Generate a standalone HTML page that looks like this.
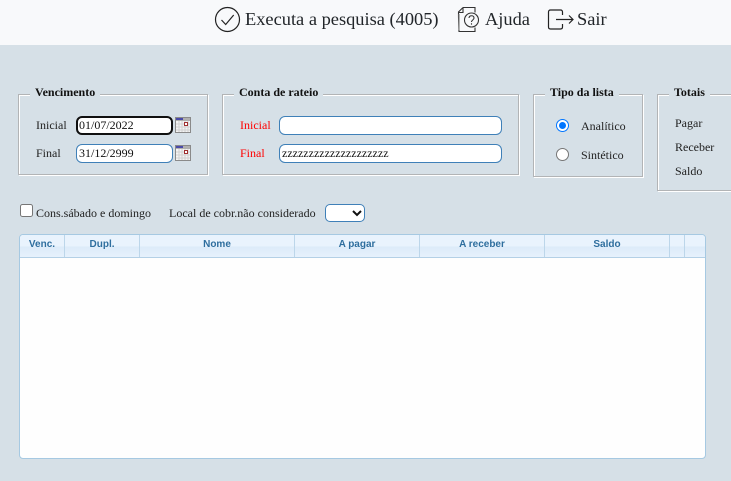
<!DOCTYPE html>
<html lang="pt">
<head>
<meta charset="utf-8">
<title>Pesquisa</title>
<style>
html,body{margin:0;padding:0;width:731px;height:481px;overflow:hidden;background:#d6e0e7;font-family:"Liberation Serif",serif;color:#222;}
#top{position:absolute;left:0;top:0;width:731px;height:45px;background:#f8f9fb;}
.tt{position:absolute;top:7px;font-size:18.4px;line-height:24px;color:#212529;white-space:nowrap;}
.fs{position:absolute;box-sizing:border-box;border:1px solid #b2b4b6;box-shadow:1px 1px 0 #fff,inset 1px 1px 0 #fff;}
.lg{position:absolute;top:-11px;background:#d6e0e7;padding:0 5px;font-weight:bold;font-size:12px;line-height:16px;color:#111;white-space:nowrap;}
.lb{position:absolute;font-size:12px;line-height:16px;color:#222;white-space:nowrap;}
.red{color:#f00;}
.in{position:absolute;box-sizing:border-box;height:19px;background:#fff;border:1px solid #3f80b8;border-radius:6px;font-size:12px;line-height:17px;padding-left:2px;color:#111;white-space:nowrap;overflow:hidden;}
.focus{border:2px solid #101010;line-height:15px;padding-left:1px;}
.cal{position:absolute;width:16px;height:16px;}
.radio{position:absolute;box-sizing:border-box;width:13px;height:13px;border-radius:50%;background:#fff;border:1px solid #767676;}
.radio.on{border:1.5px solid #0075ff;}
.radio.on:after{content:"";position:absolute;left:1.5px;top:1.5px;width:7px;height:7px;border-radius:50%;background:#0075ff;}
#tbl{position:absolute;left:19px;top:234px;width:687px;height:225px;box-sizing:border-box;background:#fefefe;border:1px solid #a6c9e2;border-radius:4px;overflow:hidden;}
#hd{position:absolute;left:0;top:0;width:685px;height:22px;border-bottom:1px solid #b4d0e6;background:linear-gradient(#e9f3fd 0,#e9f3fd 11px,#dcebf9 12px,#e6f1fc 22px);}
.th{position:absolute;top:0;height:22px;box-sizing:border-box;border-right:1px solid #bcd6ea;font:bold 10px/19px "Liberation Sans",sans-serif;color:#2e6e9e;text-align:center;}
</style>
</head>
<body>
<div id="top">
  <svg style="position:absolute;left:214px;top:6px" width="27" height="27" viewBox="0 0 27 27" fill="none" stroke="#222" stroke-width="1.2"><circle cx="13.5" cy="13.5" r="12"/><path d="M7.5 14l4.2 4.5 8-9.5"/></svg>
  <div class="tt" style="left:245px">Executa a pesquisa (4005)</div>
  <svg style="position:absolute;left:456px;top:6px" width="26" height="27" viewBox="0 0 26 27" fill="none" stroke="#333" stroke-width="1.1"><path d="M7 1.500h12v5M7 1.500L2.500 6v5M3 6.500h4V2M2.500 11l.5 14.500h16v-4"/><path d="M3 8v16" stroke="#777"/><circle cx="15.500" cy="14" r="7"/><path d="M13 12c.3-3 5-3 5 0 0 2-2.500 2-2.500 4M15.500 17.300v1.300"/></svg>
  <div class="tt" style="left:485px">Ajuda</div>
  <svg style="position:absolute;left:547px;top:7px" width="27" height="25" viewBox="0 0 27 25" fill="none" stroke="#222" stroke-width="1.2"><path d="M15.500 8V5q0-2-2-2H3.500q-2 0-2 2v15q0 2 2 2h10q2 0 2-2V17"/><path d="M9 12.500h17M22 8.500l4 4-4 4"/></svg>
  <div class="tt" style="left:577px">Sair</div>
</div>

<div class="fs" style="left:18px;top:94px;width:190px;height:81px">
  <div class="lg" style="left:11px">Vencimento</div>
  <div class="lb" style="left:17px;top:22px">Inicial</div>
  <div class="lb" style="left:17px;top:50px">Final</div>
</div>
<div class="in focus" style="left:76px;top:116px;width:97px">01/07/2022</div>
<div class="in" style="left:76px;top:144px;width:97px">31/12/2999</div>
<svg class="cal" style="left:175px;top:117px" viewBox="0 0 16 16"><rect x=".5" y=".5" width="15" height="15" fill="#f4f4f4" stroke="#8a8a8a"/><rect x="1" y="1" width="14" height="3" fill="#b0b0b0"/><rect x="1" y="1" width="7" height="2" fill="#4a4aa8"/><path d="M1 7h14M1 10h14M1 13h14M4 4v11M7 4v11M10 4v11M13 4v11" stroke="#d0d0d0" stroke-width="1"/><rect x="9.500" y="5.500" width="3" height="3" fill="#fff" stroke="#a03030"/></svg>
<svg class="cal" style="left:175px;top:145px" viewBox="0 0 16 16"><rect x=".5" y=".5" width="15" height="15" fill="#f4f4f4" stroke="#8a8a8a"/><rect x="1" y="1" width="14" height="3" fill="#b0b0b0"/><rect x="1" y="1" width="7" height="2" fill="#4a4aa8"/><path d="M1 7h14M1 10h14M1 13h14M4 4v11M7 4v11M10 4v11M13 4v11" stroke="#d0d0d0" stroke-width="1"/><rect x="9.500" y="5.500" width="3" height="3" fill="#fff" stroke="#a03030"/></svg>

<div class="fs" style="left:222px;top:94px;width:297px;height:81px">
  <div class="lg" style="left:11px">Conta de rateio</div>
  <div class="lb red" style="left:17px;top:22px">Inicial</div>
  <div class="lb red" style="left:17px;top:50px">Final</div>
</div>
<div class="in" style="left:279px;top:116px;width:223px"></div>
<div class="in" style="left:279px;top:144px;width:223px">zzzzzzzzzzzzzzzzzzzz</div>

<div class="fs" style="left:533px;top:94px;width:110px;height:83px">
  <div class="lg" style="left:11px">Tipo da lista</div>
  <div class="lb" style="left:47px;top:23px">Analítico</div>
  <div class="lb" style="left:47px;top:52px">Sintético</div>
</div>
<div class="radio on" style="left:556px;top:119px"></div>
<div class="radio" style="left:556px;top:148px"></div>

<div class="fs" style="left:657px;top:94px;width:90px;height:97px">
  <div class="lg" style="left:11px">Totais</div>
  <div class="lb" style="left:17px;top:20px">Pagar</div>
  <div class="lb" style="left:17px;top:44px">Receber</div>
  <div class="lb" style="left:17px;top:68px">Saldo</div>
</div>

<div style="position:absolute;left:20px;top:204px;width:13px;height:13px;box-sizing:border-box;background:#fff;border:1px solid #767676;border-radius:2.500px"></div>
<div class="lb" style="left:36px;top:205px">Cons.sábado e domingo</div>
<div class="lb" style="left:169px;top:205px">Local de cobr.não considerado</div>
<div style="position:absolute;left:325px;top:204px;width:40px;height:18px;box-sizing:border-box;background:#fff;border:1px solid #3f80b8;border-radius:5px">
  <svg style="position:absolute;left:26px;top:5px" width="10" height="7" viewBox="0 0 10 7" fill="none" stroke="#111" stroke-width="2"><path d="M1 1l4 4 4-4"/></svg>
</div>

<div id="tbl">
  <div id="hd">
    <div class="th" style="left:0;width:45px">Venc.</div>
    <div class="th" style="left:45px;width:75px">Dupl.</div>
    <div class="th" style="left:120px;width:155px">Nome</div>
    <div class="th" style="left:275px;width:125px">A pagar</div>
    <div class="th" style="left:400px;width:125px">A receber</div>
    <div class="th" style="left:525px;width:125px">Saldo</div>
    <div class="th" style="left:650px;width:15px"></div>
  </div>
</div>
</body>
</html>
